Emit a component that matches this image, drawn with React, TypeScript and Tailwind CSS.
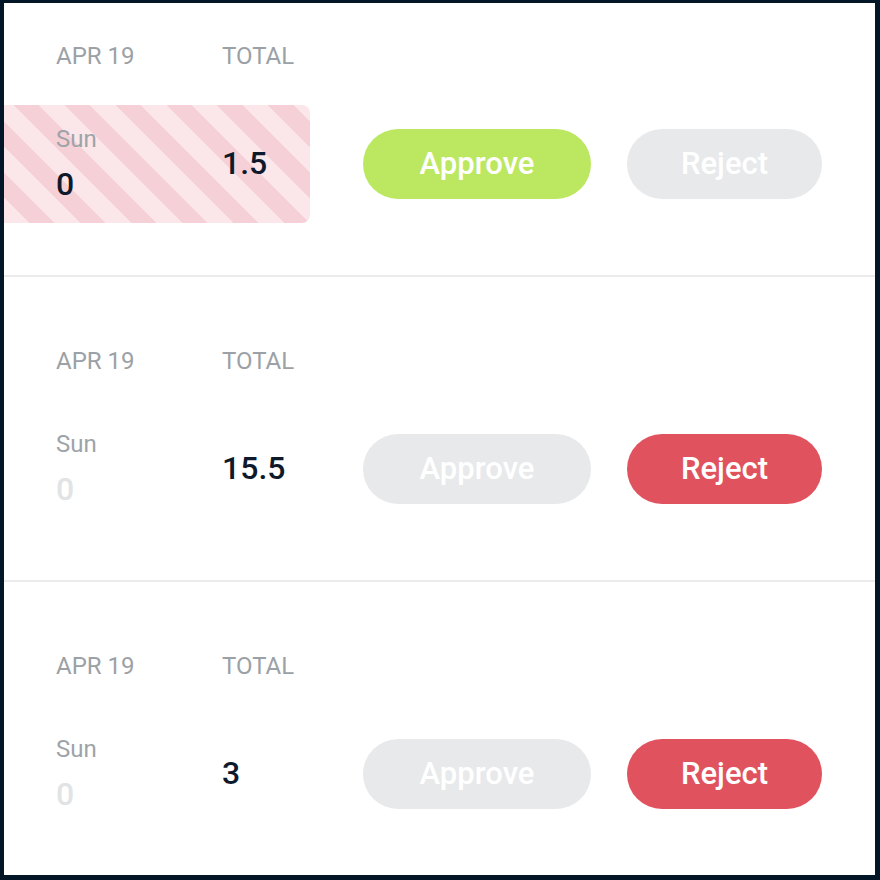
import React from "react";

type Row = {
  total: string;
  approved: boolean;
  rejected: boolean;
  striped: boolean;
  dayValueDark: boolean;
  first: boolean;
};

const rows: Row[] = [
  { total: "1.5", approved: true, rejected: false, striped: true, dayValueDark: true, first: true },
  { total: "15.5", approved: false, rejected: true, striped: false, dayValueDark: false, first: false },
  { total: "3", approved: false, rejected: true, striped: false, dayValueDark: false, first: false },
];

function RowView({ row }: { row: Row }) {
  return (
    <div className={row.first ? "pt-[39px]" : "pt-[70px]"}>
      <div className="flex pl-[52px] text-[24px] leading-[28px] text-[#9ba1a6]">
        <div className="w-[166px]">APR 19</div>
        <div>TOTAL</div>
      </div>
      <div className="mt-[35px] mb-[52px] flex items-center">
        <div
          className={
            "flex h-[118px] w-[306px] rounded-r-lg pl-[52px] " +
            (row.striped
              ? "bg-[repeating-linear-gradient(45deg,#fbe6ea_0px,#fbe6ea_18px,#f6d0d7_18px,#f6d0d7_36px)]"
              : "")
          }
        >
          <div className="flex w-[166px] flex-col pt-[20px]">
            <div className="text-[24px] leading-[28px] text-[#9ea3a8]">Sun</div>
            <div
              className={
                "mt-[13px] text-[32px] font-medium leading-[36px] " +
                (row.dayValueDark ? "text-[#0e1a2b]" : "text-[#e1e3e5]")
              }
            >
              0
            </div>
          </div>
          <div className="flex items-center pb-[2px] text-[32px] font-medium leading-[36px] text-[#0e1a2b]">
            {row.total}
          </div>
        </div>
        <div className="ml-[53px] flex gap-[36px]">
          <button
            className={
              "flex h-[70px] w-[228px] items-center justify-center rounded-full text-[31px] font-medium text-white " +
              (row.approved ? "bg-[#bce861]" : "bg-[#e8e9eb]")
            }
          >
            Approve
          </button>
          <button
            className={
              "flex h-[70px] w-[195px] items-center justify-center rounded-full text-[31px] font-medium text-white " +
              (row.rejected ? "bg-[#e0525d]" : "bg-[#e8e9eb]")
            }
          >
            Reject
          </button>
        </div>
      </div>
    </div>
  );
}

export default function App() {
  return (
    <div
      className="h-[880px] w-[880px] bg-[#031627] pt-[3px] pl-[4px] pr-[5px] pb-[5px]"
      style={{ fontFamily: "Roboto, 'Liberation Sans', sans-serif" }}
    >
      <div className="h-full w-full overflow-hidden bg-white">
        <RowView row={rows[0]} />
        <div className="h-[2px] bg-[#ebebeb]" />
        <RowView row={rows[1]} />
        <div className="h-[2px] bg-[#ebebeb]" />
        <RowView row={rows[2]} />
      </div>
    </div>
  );
}
